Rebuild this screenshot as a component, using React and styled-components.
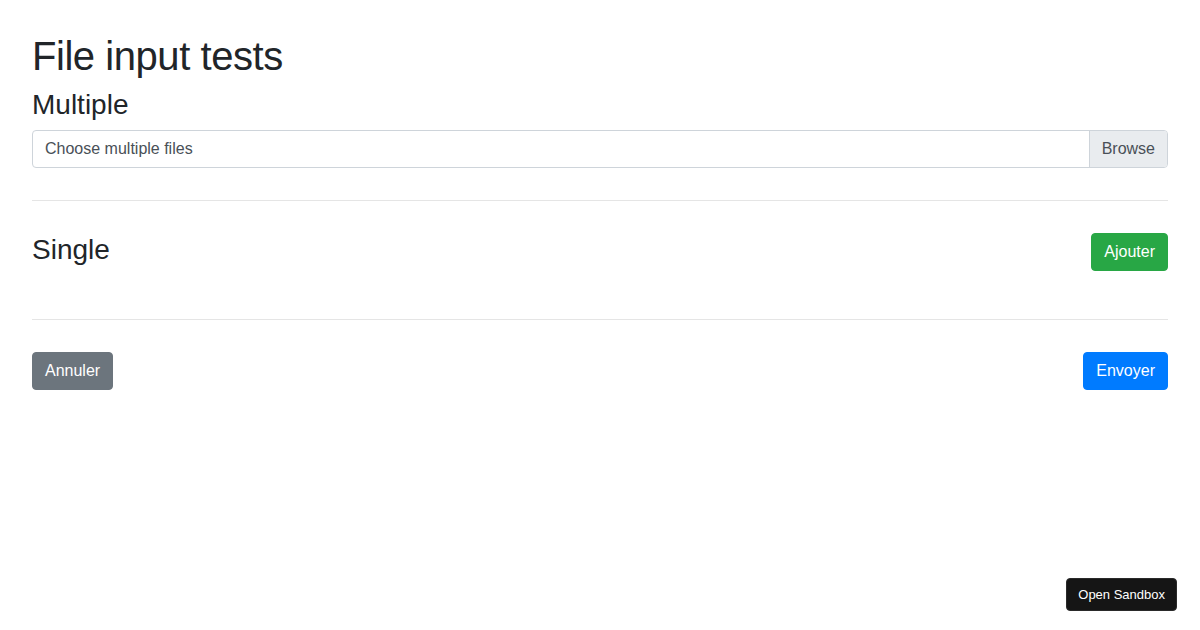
import React from "react";
import styled, { createGlobalStyle } from "styled-components";

const GlobalStyle = createGlobalStyle`
  *, *::before, *::after {
    box-sizing: border-box;
  }
  body {
    margin: 0;
    font-family: "Liberation Sans", Arial, sans-serif;
    font-size: 16px;
    line-height: 1.5;
    color: #212529;
    background: #fff;
  }
`;

const Page = styled.div`
  padding: 32px 32px 0;
`;

const Title = styled.h1`
  margin: 0 0 8px;
  font-size: 40px;
  font-weight: 500;
  line-height: 1.2;
  letter-spacing: -0.45px;
`;

const SubTitle = styled.h3`
  margin: 0 0 8px;
  font-size: 28px;
  font-weight: 500;
  line-height: 1.2;
`;

const FileField = styled.label`
  display: flex;
  height: 38px;
  margin-bottom: 32px;
  border: 1px solid #ced4da;
  border-radius: 4px;
  overflow: hidden;
  color: #495057;
  cursor: pointer;
`;

const FileText = styled.span`
  flex: 1;
  padding: 6px 12px;
  line-height: 24px;
`;

const BrowseLabel = styled.span`
  padding: 6px 12px;
  line-height: 24px;
  background: #e9ecef;
  border-left: 1px solid #ced4da;
`;

const Rule = styled.hr`
  margin: 16px 0;
  border: 0;
  border-top: 1px solid rgba(0, 0, 0, 0.1);
`;

const Row = styled.div`
  display: flex;
  justify-content: space-between;
  align-items: flex-start;
  padding-top: 16px;
  padding-bottom: ${(p) => (p.$tall ? "29px" : "0")};
`;

const colors = {
  primary: "#007bff",
  secondary: "#6c757d",
  success: "#28a745",
};

const Button = styled.button`
  font-family: inherit;
  font-size: 16px;
  line-height: 24px;
  padding: 6px 12px;
  color: #fff;
  background: ${(p) => colors[p.$variant]};
  border: 1px solid ${(p) => colors[p.$variant]};
  border-radius: 4px;
  cursor: pointer;
`;

const SandboxLink = styled.a`
  position: fixed;
  right: 23px;
  bottom: 19px;
  padding: 0 11px;
  height: 33px;
  display: flex;
  align-items: center;
  font-size: 13px;
  color: #fff;
  background: #151515;
  border: 1px solid #2a2a2a;
  border-radius: 4px;
  text-decoration: none;
`;

export default function App() {
  return (
    <>
      <GlobalStyle />
      <Page>
        <Title>File input tests</Title>
        <SubTitle>Multiple</SubTitle>
        <FileField>
          <FileText>Choose multiple files</FileText>
          <BrowseLabel>Browse</BrowseLabel>
        </FileField>
        <Rule />
        <Row $tall>
          <SubTitle>Single</SubTitle>
          <Button $variant="success">Ajouter</Button>
        </Row>
        <Rule />
        <Row>
          <Button $variant="secondary">Annuler</Button>
          <Button $variant="primary">Envoyer</Button>
        </Row>
      </Page>
      <SandboxLink href="#">Open Sandbox</SandboxLink>
    </>
  );
}
